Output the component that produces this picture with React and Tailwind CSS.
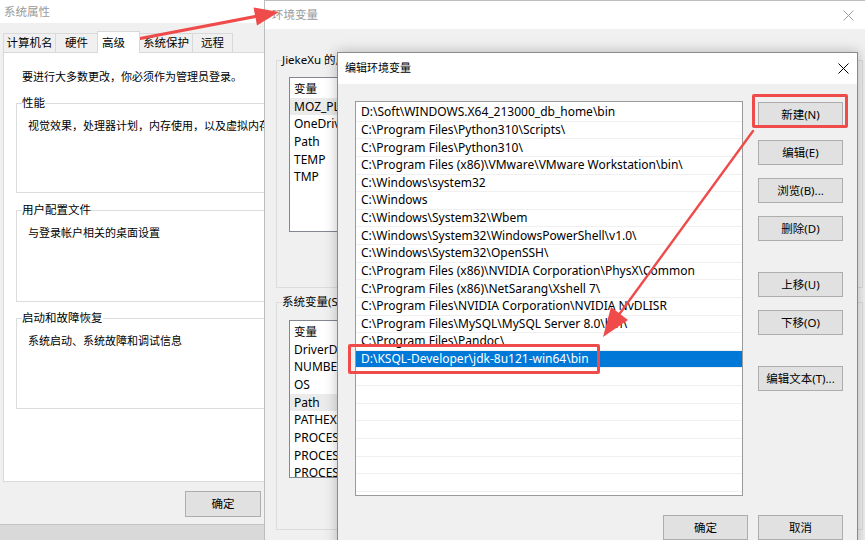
import React from "react";

function CloseX({ color = "#000" }) {
  return (
    <svg width="11" height="11" viewBox="0 0 11 11">
      <path d="M0.5 0.5L10.5 10.5M10.5 0.5L0.5 10.5" stroke={color} strokeWidth="1" />
    </svg>
  );
}

function Btn({ children, className = "" }) {
  return (
    <div
      className={
        "flex items-center justify-center bg-[#e1e1e1] border border-[#adadad] text-[11.5px] text-black " +
        className
      }
    >
      {children}
    </div>
  );
}

const tabs = [
  { t: "计算机名", w: "w-[53px]" },
  { t: "硬件", w: "w-[43px]" },
  { t: "高级", w: "w-[43px]", sel: true },
  { t: "系统保护", w: "w-[54px]" },
  { t: "远程", w: "w-[41px]" },
];

const userVars = ["MOZ_PLUGIN_PATH", "OneDrive", "Path", "TEMP", "TMP"];
const sysVars = ["DriverData", "NUMBER_OF_PROCESSORS", "OS", "Path", "PATHEXT", "PROCESSOR_ARCHITECTURE", "PROCESSOR_IDENTIFIER", "PROCESSOR_LEVEL"];

const paths = [
  "D:\\Soft\\WINDOWS.X64_213000_db_home\\bin",
  "C:\\Program Files\\Python310\\Scripts\\",
  "C:\\Program Files\\Python310\\",
  "C:\\Program Files (x86)\\VMware\\VMware Workstation\\bin\\",
  "C:\\Windows\\system32",
  "C:\\Windows",
  "C:\\Windows\\System32\\Wbem",
  "C:\\Windows\\System32\\WindowsPowerShell\\v1.0\\",
  "C:\\Windows\\System32\\OpenSSH\\",
  "C:\\Program Files (x86)\\NVIDIA Corporation\\PhysX\\Common",
  "C:\\Program Files (x86)\\NetSarang\\Xshell 7\\",
  "C:\\Program Files\\NVIDIA Corporation\\NVIDIA NvDLISR",
  "C:\\Program Files\\MySQL\\MySQL Server 8.0\\bin\\",
  "C:\\Program Files\\Pandoc\\",
  "D:\\KSQL-Developer\\jdk-8u121-win64\\bin",
];

function Group({ label, className = "", children }) {
  return (
    <fieldset className={"border border-[#dcdcdc] pl-[5px] " + className}>
      <legend className="text-[11.5px] leading-[16px] text-black">{label}</legend>
      {children}
    </fieldset>
  );
}

function VarList({ rows, highlight, className = "" }) {
  return (
    <div className={"bg-white border border-[#828790] overflow-hidden " + className}>
      <div className="h-[17.7px] flex items-center pl-[4px] text-[11.5px] leading-none">变量</div>
      {rows.map((r, i) => (
        <div
          key={i}
          className={
            "h-[17.7px] flex items-center pl-[4px] text-[12px] leading-none whitespace-nowrap " +
            (i === highlight ? "bg-[#ebebeb]" : "")
          }
        >
          {r}
        </div>
      ))}
    </div>
  );
}

export default function App() {
  const emptyRows = Array.from({ length: 9 });
  return (
    <div className="relative w-[865px] h-[540px] overflow-hidden bg-[#d9d9d9] font-['Noto_Sans','Noto_Sans_CJK_SC',sans-serif] text-black">
      {/* Window 1: 系统属性 */}
      <div className="absolute left-0 top-0 w-[438px] h-[525px] bg-[#f0f0f0] border-b border-[#c4c4c4] flex flex-col">
        <div className="h-[23px] bg-white flex items-center pl-[4px] text-[11.5px] text-[#9a9a9a]">系统属性</div>
        <div className="flex items-end pl-[3px] mt-[8px] h-[21px]">
          {tabs.map((tb, i) => (
            <div
              key={i}
              className={
                "flex items-center border border-[#d9d9d9] text-[11.5px] -ml-px first:ml-0 " +
                tb.w +
                (tb.sel
                  ? " h-[22px] bg-white border-b-0 relative z-10 -mb-px justify-start pl-[4px]"
                  : " h-[19px] bg-[#f0f0f0] border-b-0 justify-center")
              }
            >
              {tb.t}
            </div>
          ))}
        </div>
        <div className="mx-[3px] h-[430px] bg-white border border-[#d9d9d9] flex flex-col pl-[12px] pr-[12px]">
          <div className="mt-[16px] ml-[6px] text-[11px] leading-[16px]">要进行大多数更改，你必须作为管理员登录。</div>
          <Group label="性能" className="mt-[10px] h-[98px]">
            <div className="mt-[7px] ml-[6px] text-[11px] leading-[16px] whitespace-nowrap">
              视觉效果，处理器计划，内存使用，以及虚拟内存
            </div>
          </Group>
          <Group label="用户配置文件" className="mt-[9px] h-[100px]">
            <div className="mt-[7px] ml-[6px] text-[11px] leading-[16px]">与登录帐户相关的桌面设置</div>
          </Group>
          <Group label="启动和故障恢复" className="mt-[8px] h-[99px]">
            <div className="mt-[7px] ml-[6px] text-[11px] leading-[16px]">系统启动、系统故障和调试信息</div>
          </Group>
        </div>
        <div className="flex justify-end gap-[7px] pr-[11px] mt-[9px]">
          <Btn className="w-[76px] h-[26px]">确定</Btn>
          <Btn className="w-[76px] h-[26px]">取消</Btn>
          <Btn className="w-[76px] h-[26px]">应用(A)</Btn>
        </div>
      </div>

      {/* Window 2: 环境变量 */}
      <div className="absolute left-[264px] top-0 w-[620px] h-[540px] bg-[#f0f0f0] border-l border-t border-[#bdbdbd] flex flex-col">
        <div className="h-[28px] bg-white flex items-center pl-[7px] text-[11.5px] text-[#9a9a9a]">
          <span>环境变量</span>
          <div className="ml-auto mr-[13px] w-[46px] flex justify-center">
            <CloseX color="#a0a0a0" />
          </div>
        </div>
        <Group label="JiekeXu 的用户变量(U)" className="mt-[23px] ml-[11px] w-[587px] h-[236px]">
          <VarList rows={userVars} highlight={0} className="mt-[9px] ml-[7px] w-[560px] h-[155px] pt-[2px]" />
        </Group>
        <Group label="系统变量(S)" className="mt-[6px] ml-[11px] w-[587px] h-[236px]">
          <VarList rows={sysVars} highlight={3} className="mt-[10px] ml-[7px] w-[560px] h-[158px] pt-[2px]" />
        </Group>
      </div>

      {/* Window 3: 编辑环境变量 */}
      <div className="absolute left-[337px] top-[52px] w-[521px] h-[500px] bg-[#f0f0f0] border border-[#8a8a8a] shadow-[0_0_12px_rgba(0,0,0,0.25)] flex flex-col">
        <div className="h-[31px] bg-white flex items-center pl-[7px] text-[11px]">
          <span>编辑环境变量</span>
          <div className="ml-auto mr-[4px] w-[20px] flex justify-center">
            <CloseX />
          </div>
        </div>
        <div className="flex pt-[17px] pl-[17px]">
          <div className="w-[388px] h-[395px] bg-white border border-[#9a9a9a] overflow-hidden pt-[2px]">
            {paths.map((p, i) => {
              const sel = i === paths.length - 1;
              return (
                <div
                  key={i}
                  className={
                    "h-[17.64px] flex items-center pl-[5px] text-[12px] leading-none whitespace-nowrap border-b border-[#f0f0f0] " +
                    (sel ? "bg-[#0078d7] text-white" : "")
                  }
                >
                  {p}
                </div>
              );
            })}
            {emptyRows.map((_, i) => (
              <div key={"e" + i} className="h-[17.64px] border-b border-[#f0f0f0]" />
            ))}
          </div>
          <div className="ml-[15px] w-[85px] flex flex-col">
            <Btn className="h-[25px] mt-px">新建(N)</Btn>
            <Btn className="h-[25px] mt-[13px]">编辑(E)</Btn>
            <Btn className="h-[25px] mt-[13px]">浏览(B)...</Btn>
            <Btn className="h-[25px] mt-[13px]">删除(D)</Btn>
            <Btn className="h-[25px] mt-[31px]">上移(U)</Btn>
            <Btn className="h-[25px] mt-[13px]">下移(O)</Btn>
            <Btn className="h-[25px] mt-[31px]">编辑文本(T)...</Btn>
          </div>
        </div>
        <div className="flex justify-end gap-[10px] pr-[14px] mt-[19px]">
          <Btn className="w-[85px] h-[25px] border-[#0078d7]">确定</Btn>
          <Btn className="w-[85px] h-[25px]">取消</Btn>
        </div>
      </div>

      {/* Annotations */}
      <div className="absolute left-[752px] top-[94px] w-[96px] h-[34px] border-[3px] border-[#ef4b4b] rounded-[2px]" />
      <div className="absolute left-[348px] top-[344px] w-[252px] h-[30px] border-[3px] border-[#ef4b4b] rounded-[2px]" />
      <svg className="absolute left-0 top-0 pointer-events-none" width="865" height="540" viewBox="0 0 865 540">
        <line x1="127" y1="41" x2="258" y2="16" stroke="#ef4b4b" strokeWidth="3" strokeLinecap="round" />
        <polygon points="279,12 257,25.5 253.5,7.5" fill="#ef4b4b" />
        <line x1="753" y1="131" x2="618" y2="316" stroke="#ef4b4b" strokeWidth="2.4" strokeLinecap="round" />
        <polygon points="603,337 628,320 611,307" fill="#ef4b4b" />
      </svg>
    </div>
  );
}
